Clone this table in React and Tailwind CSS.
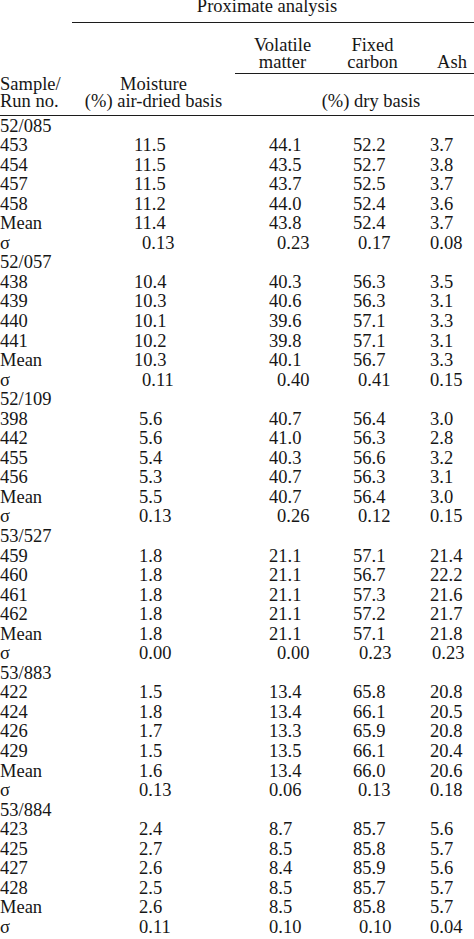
import React from "react";

const groups = [
  {
    id: "52/085",
    rows: [
      ["453", "11.5", "44.1", "52.2", "3.7"],
      ["454", "11.5", "43.5", "52.7", "3.8"],
      ["457", "11.5", "43.7", "52.5", "3.7"],
      ["458", "11.2", "44.0", "52.4", "3.6"],
      ["Mean", "11.4", "43.8", "52.4", "3.7"],
    ],
    sigma: ["0.13", "0.23", "0.17", "0.08"],
    mo: "pl-[1px]",
    so: ["pl-[9px]", "pl-[8px]", "pl-[5px]", "pl-0"],
  },
  {
    id: "52/057",
    rows: [
      ["438", "10.4", "40.3", "56.3", "3.5"],
      ["439", "10.3", "40.6", "56.3", "3.1"],
      ["440", "10.1", "39.6", "57.1", "3.3"],
      ["441", "10.2", "39.8", "57.1", "3.1"],
      ["Mean", "10.3", "40.1", "56.7", "3.3"],
    ],
    sigma: ["0.11", "0.40", "0.41", "0.15"],
    mo: "pl-[1px]",
    so: ["pl-[9px]", "pl-[8px]", "pl-[5px]", "pl-0"],
  },
  {
    id: "52/109",
    rows: [
      ["398", "5.6", "40.7", "56.4", "3.0"],
      ["442", "5.6", "41.0", "56.3", "2.8"],
      ["455", "5.4", "40.3", "56.6", "3.2"],
      ["456", "5.3", "40.7", "56.3", "3.1"],
      ["Mean", "5.5", "40.7", "56.4", "3.0"],
    ],
    sigma: ["0.13", "0.26", "0.12", "0.15"],
    mo: "pl-[6px]",
    so: ["pl-[6px]", "pl-[8px]", "pl-[5px]", "pl-0"],
  },
  {
    id: "53/527",
    rows: [
      ["459", "1.8", "21.1", "57.1", "21.4"],
      ["460", "1.8", "21.1", "56.7", "22.2"],
      ["461", "1.8", "21.1", "57.3", "21.6"],
      ["462", "1.8", "21.1", "57.2", "21.7"],
      ["Mean", "1.8", "21.1", "57.1", "21.8"],
    ],
    sigma: ["0.00", "0.00", "0.23", "0.23"],
    mo: "pl-[6px]",
    so: ["pl-[6px]", "pl-[8px]", "pl-[6px]", "pl-[2px]"],
  },
  {
    id: "53/883",
    rows: [
      ["422", "1.5", "13.4", "65.8", "20.8"],
      ["424", "1.8", "13.4", "66.1", "20.5"],
      ["426", "1.7", "13.3", "65.9", "20.8"],
      ["429", "1.5", "13.5", "66.1", "20.4"],
      ["Mean", "1.6", "13.4", "66.0", "20.6"],
    ],
    sigma: ["0.13", "0.06", "0.13", "0.18"],
    mo: "pl-[6px]",
    so: ["pl-[6px]", "pl-0", "pl-[5px]", "pl-0"],
  },
  {
    id: "53/884",
    rows: [
      ["423", "2.4", "8.7", "85.7", "5.6"],
      ["425", "2.7", "8.5", "85.8", "5.7"],
      ["427", "2.6", "8.4", "85.9", "5.6"],
      ["428", "2.5", "8.5", "85.7", "5.7"],
      ["Mean", "2.6", "8.5", "85.8", "5.7"],
    ],
    sigma: ["0.11", "0.10", "0.10", "0.04"],
    mo: "pl-[6px]",
    so: ["pl-[6px]", "pl-0", "pl-[6px]", "pl-0"],
  },
];

function Row({ label, vals, offs }) {
  return (
    <div className="grid grid-cols-[133px_136px_84px_77px_1fr] h-[19.55px] leading-[19.55px] whitespace-nowrap">
      <div>{label}</div>
      {vals.map((v, i) => (
        <div key={i} className={offs[i]}>
          {v}
        </div>
      ))}
    </div>
  );
}

export default function App() {
  return (
    <div className="w-[474px] h-[939px] overflow-hidden bg-white text-[#161616] text-[18.5px] font-['Liberation_Serif','Times_New_Roman',serif]">
      {/* Header */}
      <div className="ml-[72px] h-[22.5px] border-b-[1.5px] border-[#1c1c1c] pr-[12px] text-center leading-[12px] whitespace-nowrap">
        Proximate analysis
      </div>
      <div className="ml-[235px] h-[51px] border-b-[1.5px] border-[#1c1c1c] flex items-end pb-[2px] leading-[17px] text-center">
        <div className="w-[95px]">
          Volatile
          <br />
          matter
        </div>
        <div className="w-[85px]">
          Fixed
          <br />
          carbon
        </div>
        <div className="flex-1 pl-[15px] whitespace-nowrap">Ash</div>
      </div>
      <div className="h-[42px] border-b-[1.5px] border-[#1c1c1c] flex items-end pb-[5px] leading-[17px] whitespace-nowrap">
        <div className="w-[72px]">
          Sample/
          <br />
          Run no.
        </div>
        <div className="w-[163px] text-center">
          Moisture
          <br />
          (%) air-dried basis
        </div>
        <div className="flex-1 pl-[33px] text-center">(%) dry basis</div>
      </div>

      {/* Body */}
      <div className="pt-[1px]">
        {groups.map((g) => (
          <div key={g.id}>
            <div className="h-[19.55px] leading-[19.55px]">{g.id}</div>
            {g.rows.map((r) => (
              <Row
                key={r[0]}
                label={r[0]}
                vals={r.slice(1)}
                offs={[g.mo, "pl-0", "pl-0", "pl-0"]}
              />
            ))}
            <Row label="σ" vals={g.sigma} offs={g.so} />
          </div>
        ))}
      </div>
    </div>
  );
}
